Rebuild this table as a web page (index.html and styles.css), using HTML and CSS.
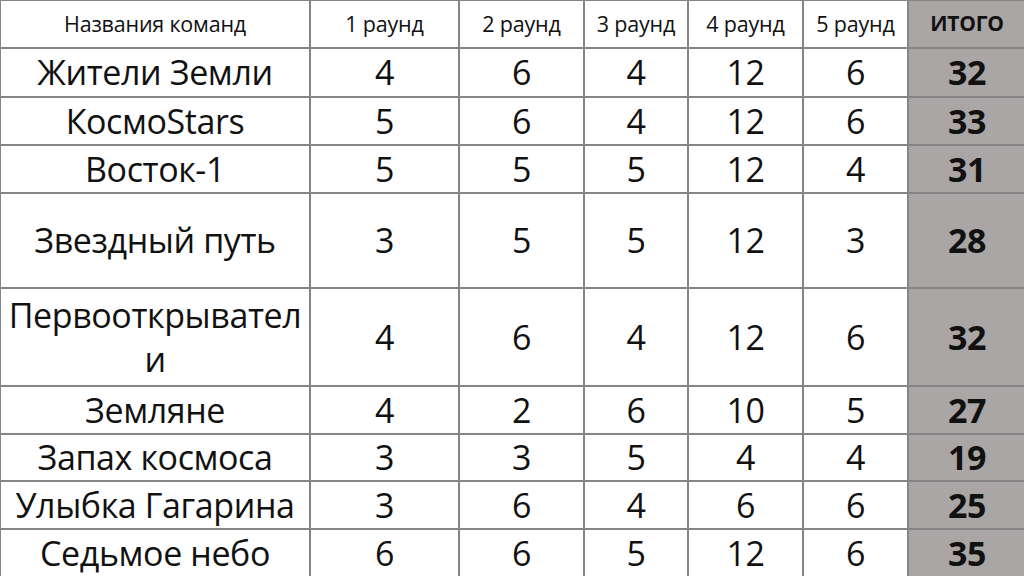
FILE: index.html
```html
<!DOCTYPE html>
<html lang="ru">
<head>
<meta charset="utf-8">
<title>Итоги</title>
<link rel="stylesheet" href="styles.css">
</head>
<body>
<table class="scores">
  <colgroup>
    <col class="c-name"><col class="c-r1"><col class="c-r2"><col class="c-r3"><col class="c-r4"><col class="c-r5"><col class="c-total">
  </colgroup>
  <thead>
    <tr class="h-head">
      <th>Названия команд</th><th>1 раунд</th><th>2 раунд</th><th>3 раунд</th><th>4 раунд</th><th>5 раунд</th><th class="total">ИТОГО</th>
    </tr>
  </thead>
  <tbody>
    <tr class="h1"><td>Жители Земли</td><td>4</td><td>6</td><td>4</td><td>12</td><td>6</td><td class="total">32</td></tr>
    <tr class="h2"><td>КосмоStars</td><td>5</td><td>6</td><td>4</td><td>12</td><td>6</td><td class="total">33</td></tr>
    <tr class="h3"><td>Восток-1</td><td>5</td><td>5</td><td>5</td><td>12</td><td>4</td><td class="total">31</td></tr>
    <tr class="h4"><td>Звездный путь</td><td>3</td><td>5</td><td>5</td><td>12</td><td>3</td><td class="total">28</td></tr>
    <tr class="h5"><td>Первооткрывател<br>и</td><td>4</td><td>6</td><td>4</td><td>12</td><td>6</td><td class="total">32</td></tr>
    <tr class="h6"><td>Земляне</td><td>4</td><td>2</td><td>6</td><td>10</td><td>5</td><td class="total">27</td></tr>
    <tr class="h7"><td>Запах космоса</td><td>3</td><td>3</td><td>5</td><td>4</td><td>4</td><td class="total">19</td></tr>
    <tr class="h8"><td>Улыбка Гагарина</td><td>3</td><td>6</td><td>4</td><td>6</td><td>6</td><td class="total">25</td></tr>
    <tr class="h9"><td>Седьмое небо</td><td>6</td><td>6</td><td>5</td><td>12</td><td>6</td><td class="total">35</td></tr>
  </tbody>
</table>
</body>
</html>
```

FILE: styles.css
```css
html, body {
  margin: 0;
  padding: 0;
  background: #ffffff;
  overflow: hidden;
}

body {
  font-family: "Open Sans", "Noto Sans", "DejaVu Sans", sans-serif;
  color: #111111;
}

.scores {
  table-layout: fixed;
  border-collapse: collapse;
  width: 1026px;
  margin: -1px 0 0 -1px;
}

.c-name { width: 310px; }
.c-r1 { width: 149px; }
.c-r2 { width: 125px; }
.c-r3 { width: 104px; }
.c-r4 { width: 115px; }
.c-r5 { width: 105px; }
.c-total { width: 118px; }

.scores th,
.scores td {
  border: 2px solid #858585;
  padding: 0;
  text-align: center;
  vertical-align: middle;
  line-height: 1.3;
  white-space: nowrap;
}

.scores th {
  font-size: 21.5px;
  font-weight: 400;
  letter-spacing: -0.2px;
}

.scores td {
  font-size: 34px;
  letter-spacing: -0.4px;
}

.scores .total {
  background: #aaa6a5;
  font-weight: 700;
}

.scores th.total {
  font-size: 21px;
}

.h-head { height: 48px; }
.h1 { height: 49px; }
.h2 { height: 48px; }
.h3 { height: 48px; }
.h4 { height: 95px; }
.h5 { height: 98px; }
.h6 { height: 48px; }
.h7 { height: 47px; }
.h8 { height: 48px; }
.h9 { height: 48px; }
```
